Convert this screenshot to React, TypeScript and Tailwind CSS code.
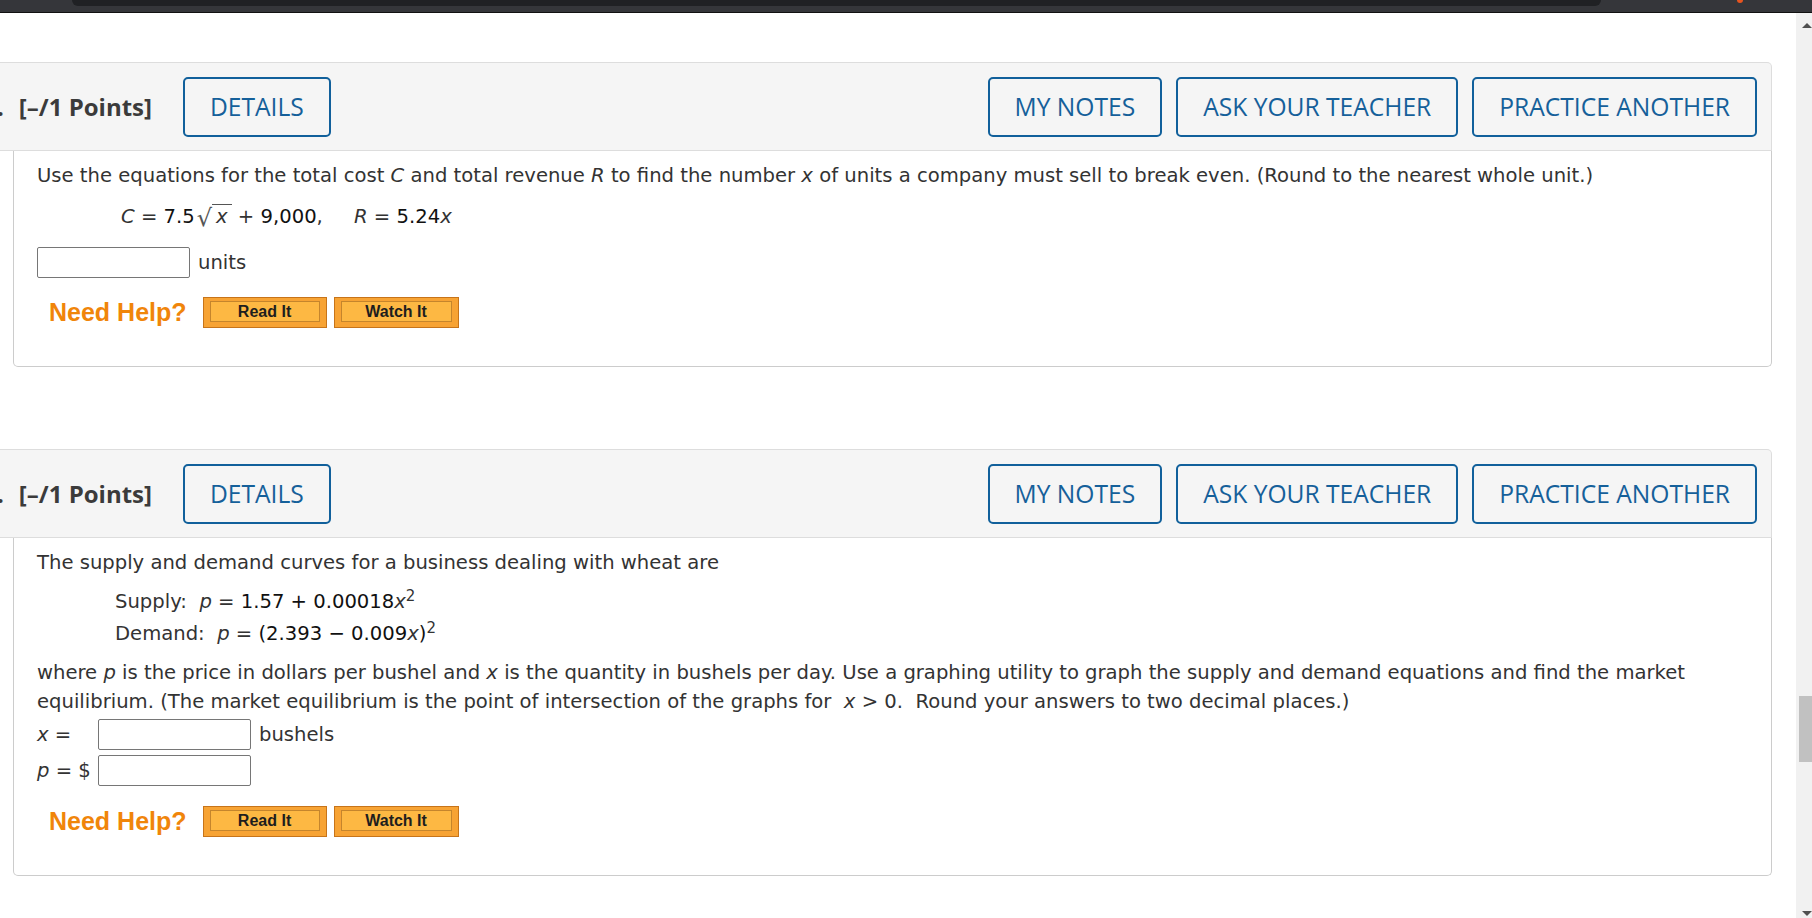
import React from "react";

const headerFont = { fontFamily: '"Open Sans", "Noto Sans", sans-serif' };
const bodyFont = { fontFamily: '"DejaVu Sans", Verdana, sans-serif' };
const helpFont = { fontFamily: '"Liberation Sans", Arial, sans-serif' };

const OutlineButton: React.FC<{ label: string }> = ({ label }) => (
  <button className="h-[60px] px-[25px] border-2 border-[#11609b] rounded-[5px] text-[24.6px] leading-[36px] text-[#15609a] bg-[#f5f5f5]">
    {label}
  </button>
);

const HelpButton: React.FC<{ label: string; width: string }> = ({ label, width }) => (
  <div className={`${width} h-[31px] border border-[#c7741a] bg-[#f7a334] pt-[3px] pb-[5px] px-[6px]`}>
    <div className="h-full border border-[#c5852c] bg-[#fdb843] flex items-center justify-center text-[16px] font-bold text-[#1e1e1e]" style={helpFont}>
      {label}
    </div>
  </div>
);

const NeedHelp: React.FC = () => (
  <div className="flex items-center gap-[7px] ml-[12px]">
    <span className="text-[25px] font-bold text-[#f0850a] mr-[9px]" style={helpFont}>
      Need Help?
    </span>
    <HelpButton label="Read It" width="w-[124px]" />
    <HelpButton label="Watch It" width="w-[125px]" />
  </div>
);

const Header: React.FC = () => (
  <div className="h-[89px] bg-[#f5f5f5] border border-l-0 border-[#dddddd] rounded-tr-[5px] flex items-center pr-[14px]" style={headerFont}>
    <span className="text-[24px] font-bold text-[#3b3b3b] -ml-[3px]">.</span>
    <span className="text-[24px] font-bold text-[#3b3b3b] ml-[15px]">[–/1 Points]</span>
    <div className="ml-[31px]">
      <OutlineButton label="DETAILS" />
    </div>
    <div className="flex-1" />
    <div className="flex gap-[14px]">
      <OutlineButton label="MY NOTES" />
      <OutlineButton label="ASK YOUR TEACHER" />
      <OutlineButton label="PRACTICE ANOTHER" />
    </div>
  </div>
);

const AnswerBox: React.FC<{ w?: string }> = ({ w = "w-[153px]" }) => (
  <div className={`${w} h-[31px] border border-[#767676] rounded-[2px] bg-white`} />
);

const Question1: React.FC = () => (
  <div>
    <Header />
    <div className="ml-[13px] border border-t-0 border-[#cccccc] rounded-b-[5px] pl-[23px] pt-[10px] pb-[38px] text-[19.6px] leading-[29px] text-[#333]" style={bodyFont}>
      <p>
        Use the equations for the total cost <i>C</i> and total revenue <i>R</i> to find the number <i>x</i> of units a company must sell to break even. (Round to the nearest whole unit.)
      </p>
      <p className="mt-[11px] ml-[84px]">
        <i>C</i> = <span className="text-[#111]">7.5</span>
        <span className="relative top-[3px] text-[24px] text-[#555] ml-[2px]">√</span>
        <span className="border-t border-[#555] pl-[4px] pr-[4px]"><i>x</i></span> + <span className="text-[#111]">9,000</span>,&nbsp;&nbsp;&nbsp;&nbsp;&nbsp;<i>R</i> = <span className="text-[#111]">5.24</span><i>x</i>
      </p>
      <div className="mt-[16px] flex items-center gap-[8px]">
        <AnswerBox />
        <span>units</span>
      </div>
      <div className="mt-[19px]">
        <NeedHelp />
      </div>
    </div>
  </div>
);

const Question2: React.FC = () => (
  <div>
    <Header />
    <div className="ml-[13px] border border-t-0 border-[#cccccc] rounded-b-[5px] pl-[23px] pt-[10px] pb-[38px] text-[19.6px] leading-[29px] text-[#333]" style={bodyFont}>
      <p>The supply and demand curves for a business dealing with wheat are</p>
      <div className="mt-[10px] ml-[78px]">
        <p>
          Supply:&nbsp; <i>p</i> = <span className="text-[#111]">1.57 + 0.00018</span><i>x</i><sup className="text-[15px]">2</sup>
        </p>
        <p className="mt-[3px]">
          Demand:&nbsp; <i>p</i> = <span className="text-[#111]">(2.393 − 0.009</span><i>x</i><span className="text-[#111]">)</span><sup className="text-[15px]">2</sup>
        </p>
      </div>
      <p className="mt-[10px] pr-[40px]">
        where <i>p</i> is the price in dollars per bushel and <i>x</i> is the quantity in bushels per day. Use a graphing utility to graph the supply and demand equations and find the market equilibrium. (The market equilibrium is the point of intersection of the graphs for&nbsp; <i>x</i> &gt; 0.&nbsp; Round your answers to two decimal places.)
      </p>
      <div className="mt-[3px] flex flex-col gap-[5px]">
        <div className="flex items-center">
          <span className="w-[61px]"><i>x</i> =</span>
          <AnswerBox w="w-[153px]" />
          <span className="ml-[8px]">bushels</span>
        </div>
        <div className="flex items-center">
          <span className="w-[61px]"><i>p</i> = $</span>
          <AnswerBox w="w-[153px]" />
        </div>
      </div>
      <div className="mt-[20px]">
        <NeedHelp />
      </div>
    </div>
  </div>
);

const Scrollbar: React.FC = () => (
  <div className="w-[16px] bg-[#f1f1f1] flex flex-col items-center">
    <div className="mt-[10px] ml-[6px] w-0 h-0 border-l-[5px] border-r-[5px] border-b-[5px] border-l-transparent border-r-transparent border-b-[#505050]" />
    <div className="mt-[668px] ml-[4px] w-[14px] h-[66px] bg-[#c1c1c1]" />
    <div className="flex-1" />
    <div className="mb-[2px] ml-[6px] w-0 h-0 border-l-[5px] border-r-[5px] border-t-[5px] border-l-transparent border-r-transparent border-t-[#505050]" />
  </div>
);

export default function App() {
  return (
    <div className="w-[1812px] h-[918px] bg-white flex flex-col overflow-hidden">
      <div className="h-[13px] bg-[#35363a] border-b border-[#111] relative">
        <div className="ml-[72px] w-[1529px] h-[6px] bg-[#202124] rounded-b-[8px]" />
        <div className="absolute left-[1737px] top-0 w-[6px] h-[3px] bg-[#e8541f] rounded-b-full" />
      </div>
      <div className="flex-1 flex overflow-hidden">
        <div className="flex-1 pr-[24px] pt-[49px]">
          <Question1 />
          <div className="h-[82px]" />
          <Question2 />
        </div>
        <Scrollbar />
      </div>
    </div>
  );
}
